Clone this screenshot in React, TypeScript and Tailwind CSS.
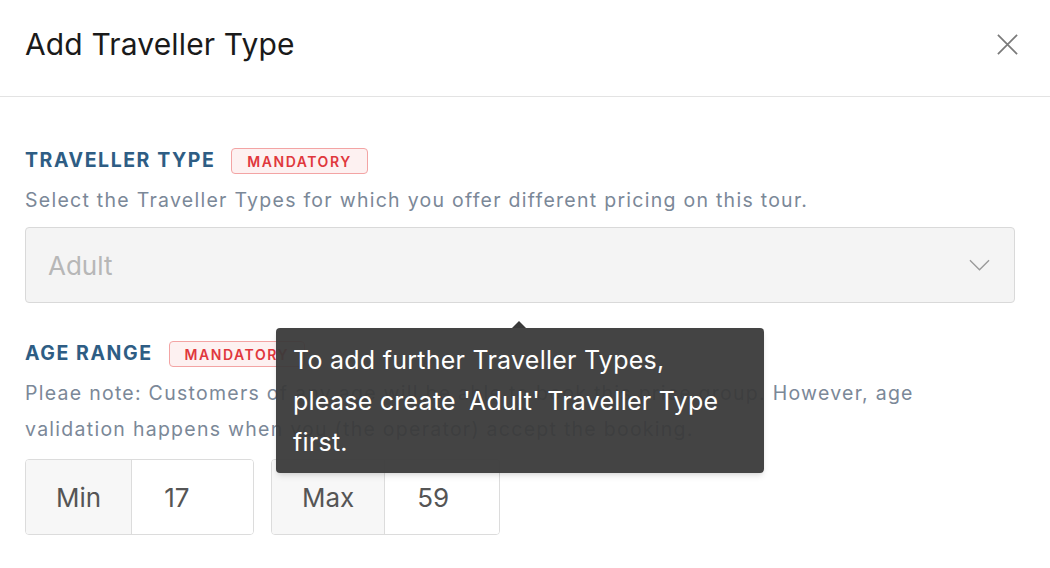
import React from 'react';

const font = { fontFamily: 'Inter, "Noto Sans", "Liberation Sans", sans-serif' };

function Badge() {
  return (
    <span className="inline-flex items-center h-[26px] px-[15px] rounded-[4px] border border-[#f3a4a4] bg-[#fdf1f1] text-[#e0383d] text-[14px] font-semibold tracking-[0.11em]">
      MANDATORY
    </span>
  );
}

function AddonInput({ label, value }: { label: string; value: string }) {
  return (
    <div className="flex w-[229px] h-[76px] border border-[#dcdcdc] rounded-[4px] overflow-hidden">
      <div className="flex items-center px-[30px] bg-[#f7f7f7] border-r border-[#dcdcdc] text-[26px] text-[#555]">
        {label}
      </div>
      <div className="flex-1 flex items-center pl-[32px] text-[26px] text-[#555] bg-white">{value}</div>
    </div>
  );
}

export default function App() {
  return (
    <div className="relative w-[1050px] h-[568px] bg-white overflow-hidden" style={font}>
      {/* Header */}
      <div className="flex items-start justify-between h-[97px] pt-[25px] pl-[25px] pr-[31px] border-b border-[#e3e3e3]">
        <h1 className="text-[30px] leading-[38px] tracking-[0.005em] text-[#1a1a1a]">Add Traveller Type</h1>
        <svg width="23" height="23" viewBox="0 0 24 24" className="mt-[8px]" fill="none" stroke="#7a7a7a" strokeWidth="1.8">
          <path d="M2 2 L22 22 M22 2 L2 22" />
        </svg>
      </div>

      {/* Body */}
      <div className="px-[25px] pt-[51px]">
        <div className="flex items-center gap-[16px] h-[26px]">
          <span className="text-[19.5px] font-bold tracking-[0.08em] text-[#2e5d84]">TRAVELLER TYPE</span>
          <Badge />
        </div>
        <p className="mt-[8px] text-[19.5px] leading-[36px] tracking-[0.065em] text-[#7b8898]">
          Select the Traveller Types for which you offer different pricing on this tour.
        </p>
        <div className="mt-[9px] flex items-center justify-between h-[76px] w-[990px] pl-[22px] pr-[24px] bg-[#f4f4f4] border border-[#d9d9d9] rounded-[4px]">
          <span className="text-[26px] text-[#b7b7b7]">Adult</span>
          <svg width="21" height="12" viewBox="0 0 22 12" fill="none" stroke="#9a9a9a" strokeWidth="1.4">
            <path d="M1 1 L11 11 L21 1" />
          </svg>
        </div>

        <div className="mt-[38px] flex items-center gap-[16px] h-[26px]">
          <span className="text-[19.5px] font-bold tracking-[0.08em] text-[#2e5d84]">AGE RANGE</span>
          <Badge />
        </div>
        <p className="mt-[8px] w-[940px] text-[19.5px] leading-[36px] tracking-[0.065em] text-[#7b8898]">
          Pleae note: Customers of any age will be able to book this price group. However, age validation happens when you (the operator) accept the booking.
        </p>
        <div className="mt-[12px] flex gap-[17px]">
          <AddonInput label="Min" value="17" />
          <AddonInput label="Max" value="59" />
        </div>
      </div>

      {/* Tooltip */}
      <div className="absolute left-[276px] top-[328px] w-[488px] h-[145px] rounded-[4px] bg-[#3a3a3a]/95 pl-[17px] pr-[26px] pt-[12px] text-white text-[25px] leading-[41px] tracking-[0.01em] shadow-md">
        <div className="absolute -top-[7px] left-[236px] w-0 h-0 border-l-[7px] border-r-[7px] border-b-[7px] border-l-transparent border-r-transparent border-b-[#3a3a3a]" />
        To add further Traveller Types, please create 'Adult' Traveller Type first.
      </div>
    </div>
  );
}
